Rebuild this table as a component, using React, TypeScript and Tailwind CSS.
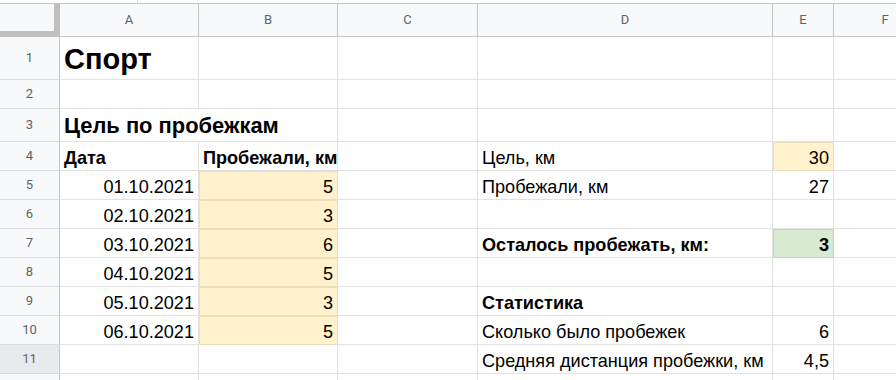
import React from "react";

type CellDef = {
  v?: string;
  right?: boolean;
  bold?: boolean;
  fill?: "y" | "g";
  span2?: boolean;
  size?: "title" | "h2";
};

const font = { fontFamily: '"Liberation Sans", Arial, sans-serif' };
const hdrFont = { fontFamily: 'Roboto, "Liberation Sans", Arial, sans-serif' };

function Cell({ c }: { c: CellDef }) {
  const fillCls =
    c.fill === "y"
      ? "bg-[#fff2cc] border-[#eadfbd] shadow-[inset_0_1px_0_#eadfbd,inset_1px_0_0_#eadfbd]"
      : c.fill === "g"
      ? "bg-[#d9ead3] border-[#c3d8bb] shadow-[inset_0_1px_0_#c3d8bb,inset_1px_0_0_#c3d8bb]"
      : "bg-white border-[#e2e2e3]";
  const sizeCls =
    c.size === "title"
      ? "text-[29px] leading-[32px] pb-[4px]"
      : c.size === "h2"
      ? "text-[21.9px] leading-[24px] pb-[3px]"
      : "text-[18.1px] leading-[20px] pb-[2px]";
  return (
    <div
      className={`flex items-end whitespace-nowrap border-r border-b pl-[4px] pr-[4px] text-black ${fillCls} ${sizeCls} ${
        c.right ? "justify-end" : "justify-start"
      } ${c.bold ? "font-bold" : "font-normal"} ${c.span2 ? "col-span-2" : ""}`}
      style={font}
    >
      {c.v ?? ""}
    </div>
  );
}

const E: CellDef = {};

const rows: { h: string; cells: CellDef[]; sel?: boolean; label?: string }[] = [
  { h: "h-[43px]", label: "1", cells: [{ v: "Спорт", bold: true, size: "title" }, E, E, E, E, E] },
  { h: "h-[29px]", label: "2", cells: [E, E, E, E, E, E] },
  { h: "h-[33px]", label: "3", cells: [{ v: "Цель по пробежкам", bold: true, size: "h2", span2: true }, E, E, E, E] },
  {
    h: "h-[29px]",
    label: "4",
    cells: [
      { v: "Дата", bold: true },
      { v: "Пробежали, км", bold: true },
      E,
      { v: "Цель, км" },
      { v: "30", right: true, fill: "y" },
      E,
    ],
  },
  {
    h: "h-[29px]",
    label: "5",
    cells: [
      { v: "01.10.2021", right: true },
      { v: "5", right: true, fill: "y" },
      E,
      { v: "Пробежали, км" },
      { v: "27", right: true },
      E,
    ],
  },
  {
    h: "h-[29px]",
    label: "6",
    cells: [{ v: "02.10.2021", right: true }, { v: "3", right: true, fill: "y" }, E, E, E, E],
  },
  {
    h: "h-[29px]",
    label: "7",
    cells: [
      { v: "03.10.2021", right: true },
      { v: "6", right: true, fill: "y" },
      E,
      { v: "Осталось пробежать, км:", bold: true },
      { v: "3", right: true, bold: true, fill: "g" },
      E,
    ],
  },
  {
    h: "h-[29px]",
    label: "8",
    cells: [{ v: "04.10.2021", right: true }, { v: "5", right: true, fill: "y" }, E, E, E, E],
  },
  {
    h: "h-[29px]",
    label: "9",
    cells: [
      { v: "05.10.2021", right: true },
      { v: "3", right: true, fill: "y" },
      E,
      { v: "Статистика", bold: true },
      E,
      E,
    ],
  },
  {
    h: "h-[29px]",
    label: "10",
    cells: [
      { v: "06.10.2021", right: true },
      { v: "5", right: true, fill: "y" },
      E,
      { v: "Сколько было пробежек" },
      { v: "6", right: true },
      E,
    ],
  },
  {
    h: "h-[29px]",
    label: "11",
    sel: true,
    cells: [E, E, E, { v: "Средняя дистанция пробежки, км" }, { v: "4,5", right: true }, E],
  },
  { h: "h-[29px]", label: "", cells: [E, E, E, E, E, E] },
];

const gridCols = "grid grid-cols-[60px_139px_139px_140px_295px_61px_103px]";

export default function App() {
  return (
    <div className="w-[896px] h-[380px] overflow-hidden bg-white">
      <div className="h-[3px] w-[937px] flex">
        <div className="w-[138px] border-r border-[#dadce0]" />
      </div>
      <div className="w-[937px] border-t border-[#c4c7c5]">
        <div className={`${gridCols} h-[33px]`}>
          <div className="bg-[#f8f9fa] border-r-[6px] border-b-[6px] border-[#bfbfbf]" />
          {["A", "B", "C", "D", "E", "F"].map((l) => (
            <div
              key={l}
              className="flex items-center justify-center bg-[#f8f9fa] border-r border-b border-[#c4c7c5] text-[13px] text-[#5f6368]"
              style={hdrFont}
            >
              {l}
            </div>
          ))}
        </div>
        {rows.map((r, i) => (
          <div key={i} className={`${gridCols} ${r.h}`}>
            <div
              className={`flex items-center justify-center border-r border-b border-r-[#c4c7c5] border-b-[#dadce0] text-[13px] text-[#5f6368] ${
                r.sel ? "bg-[#e8eaed]" : "bg-[#f8f9fa]"
              }`}
              style={hdrFont}
            >
              {r.label}
            </div>
            {r.cells.map((c, j) => (
              <Cell key={j} c={c} />
            ))}
          </div>
        ))}
      </div>
    </div>
  );
}
